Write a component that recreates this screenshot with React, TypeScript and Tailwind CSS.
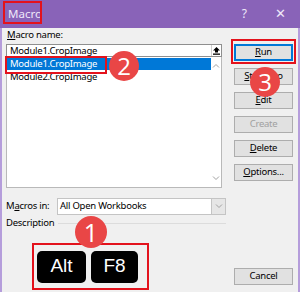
import React from 'react';

const Btn: React.FC<{ children: React.ReactNode; disabled?: boolean; def?: boolean }> = ({ children, disabled, def }) => (
  <div
    className={`h-[17px] flex items-center justify-center bg-[#e1e1e1] ${def ? 'border-2 border-[#0078d7]' : 'border border-[#adadad]'} ${disabled ? 'text-[#a0a0a0]' : 'text-black'}`}
  >
    {children}
  </div>
);

const Badge: React.FC<{ n: string; className: string }> = ({ n, className }) => (
  <div
    className={`absolute rounded-full bg-[#e94646] text-white flex items-center justify-center leading-none tracking-normal font-['Open_Sans',sans-serif] ${className}`}
  >
    {n}
  </div>
);

const Chevron: React.FC<{ up?: boolean }> = ({ up }) => (
  <svg width="8" height="5" viewBox="0 0 8 5" fill="none" stroke="#a0a0a0" strokeWidth="1">
    <path d={up ? 'M1 4.5L4 1.5L7 4.5' : 'M1 0.5L4 3.5L7 0.5'} />
  </svg>
);

export default function App() {
  return (
    <div className="relative w-[300px] h-[292px] bg-[#f0f0f0] overflow-hidden font-['Noto_Sans',sans-serif] text-[9.5px] tracking-[-0.25px] text-black">
      {/* Title bar */}
      <div className="h-[28px] bg-[#8963b8] flex items-center pl-[8px] pr-[14px] text-[#efe8f8] tracking-normal">
        <span className="text-[11.5px]">Macro</span>
        <span className="ml-auto text-[12px]">?</span>
        <span className="ml-[28px] text-[13px]">✕</span>
      </div>

      <div className="flex h-[264px] border-x-2 border-[#b59ddb]">
        {/* Left column */}
        <div className="w-[224px] pl-[4px] flex flex-col">
          <div className="mt-[1px] h-[12px] leading-[12px] pl-[1px]">
            <span className="underline">M</span>acro name:
          </div>
          <div className="mt-[3px] h-[13px] w-[216px] bg-white border border-[#8f8f8f] flex items-center">
            <span className="pl-[3px] flex-1 leading-[11px]">Module1.CropImage</span>
            <div className="w-[10px] h-full flex items-center justify-center border-l border-[#cfcfcf]">
              <svg width="7" height="8" viewBox="0 0 7 8" fill="#000">
                <path d="M3.5 0L7 3.5H5V5.5H2V3.5H0Z" />
                <rect x="0" y="6.5" width="7" height="1.3" />
              </svg>
            </div>
          </div>
          <div className="h-[131px] w-[216px] bg-white border border-t-0 border-[#b9b9b9] flex">
            <div className="flex-1 pt-[1px]">
              <div className="h-[12px] leading-[12px] bg-[#0078d7] text-white pl-[3px]">Module1.CropImage</div>
              <div className="h-[13px] leading-[13px] pl-[3px]">Module2.CropImage</div>
            </div>
            <div className="w-[10px] flex flex-col items-center justify-between py-[6px]">
              <Chevron up />
              <Chevron />
            </div>
          </div>

          <div className="mt-[10px] h-[17px] flex items-center">
            <span className="w-[51px]">
              M<span className="underline">a</span>cros in:
            </span>
            <div className="flex-1 h-full bg-white border border-[#c4c4c4] flex items-center">
              <span className="pl-[2px] flex-1">All Open Workbooks</span>
              <div className="w-[14px] h-full bg-[#e6e6e6] border-l border-[#c4c4c4] flex items-center justify-center">
                <Chevron />
              </div>
            </div>
          </div>

          <div className="mt-[2px] h-[12px] flex items-center">
            <span>Description</span>
            <div className="ml-[4px] flex-1 h-px bg-[#dcdcdc]" />
          </div>

          <div className="mt-[14px] ml-[26px] w-[117px] h-[47px] border-2 border-[#e3121c] flex items-center gap-[5px] pl-[3px] tracking-normal">
            <div className="w-[49px] h-[32px] rounded-[5px] bg-black text-white flex items-center justify-center text-[19px] font-['Liberation_Sans',sans-serif]">
              Alt
            </div>
            <div className="w-[47px] h-[32px] rounded-[5px] bg-black text-white flex items-center justify-center text-[19px] font-['Liberation_Sans',sans-serif]">
              F8
            </div>
          </div>
        </div>

        {/* Right column */}
        <div className="w-[59px] ml-[8px] pt-[16px] pb-[7px] flex flex-col gap-[7px]">
          <Btn def>
            <span className="underline">R</span>un
          </Btn>
          <Btn>
            <span className="underline">S</span>tep Into
          </Btn>
          <Btn>
            <span className="underline">E</span>dit
          </Btn>
          <Btn disabled>Create</Btn>
          <Btn>
            <span className="underline">D</span>elete
          </Btn>
          <Btn>
            <span className="underline">O</span>ptions...
          </Btn>
          <div className="mt-auto">
            <Btn>Cancel</Btn>
          </div>
        </div>
      </div>

      {/* Annotations */}
      <div className="absolute left-[3px] top-[1px] w-[39px] h-[23px] border-2 border-[#e3121c]" />
      <div className="absolute left-[5px] top-[56px] w-[102px] h-[18px] border-2 border-[#e3121c]" />
      <div className="absolute left-[231px] top-[39px] w-[65px] h-[25px] border-2 border-[#e3121c]" />
      <Badge n="2" className="left-[109px] top-[51px] w-[30px] h-[30px] text-[24px]" />
      <Badge n="3" className="left-[250px] top-[67px] w-[30px] h-[30px] text-[24px]" />
      <Badge n="1" className="left-[75px] top-[216px] w-[32px] h-[32px] text-[25px]" />
    </div>
  );
}
